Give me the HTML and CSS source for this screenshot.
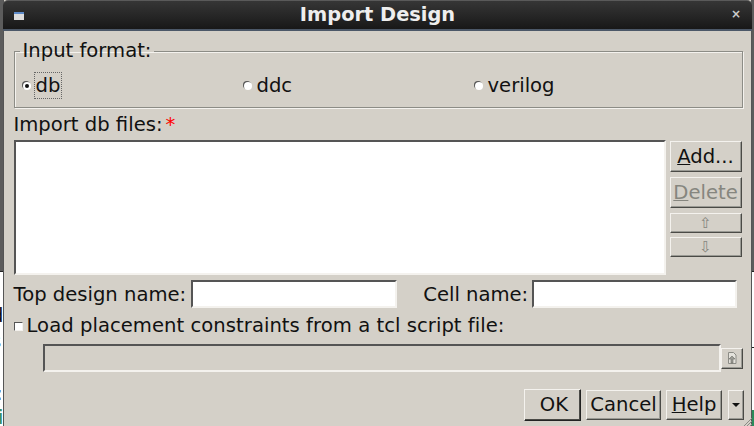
FILE: index.html
```html
<!DOCTYPE html>
<html lang="en">
<head>
    <meta charset="UTF-8">
    <title>Import Design</title>
    <link rel="stylesheet" href="styles.css">
</head>
<body>

    <!-- what shows of the desktop behind the dialog -->
    <div class="behind-dark"></div>
    <div class="behind-line"></div>
    <div class="behind-line second"></div>
    <span class="behind-text t1">d</span>
    <span class="behind-text t2">s</span>
    <span class="behind-text t3">:</span>
    <span class="behind-text t4">i</span>
    <span class="behind-green"></span>

    <div class="window">
        <div class="titlebar">
            <span class="win-icon"></span>
            <span class="win-title">Import Design</span>
            <span class="win-close">×</span>
        </div>

        <div class="dialog">
            <fieldset class="format">
                <legend>Input format:</legend>
                <div class="radio-row">
                    <label class="radio-item first"><span class="radio on"></span><span class="focus">db</span></label>
                    <label class="radio-item second-col"><span class="radio"></span><span class="radio-text">ddc</span></label>
                    <label class="radio-item"><span class="radio"></span><span class="radio-text">verilog</span></label>
                </div>
            </fieldset>

            <div class="files-label">Import db files:<span class="req">*</span></div>

            <div class="files-row">
                <div class="listbox"></div>
                <div class="side-buttons">
                    <button class="btn side"><u>A</u>dd...</button>
                    <button class="btn side off"><u>D</u>elete</button>
                    <button class="btn arrow off">⇧</button>
                    <button class="btn arrow off">⇩</button>
                </div>
            </div>

            <div class="names-row">
                <span class="name-label">Top design name:</span>
                <input class="entry top-name" type="text">
                <span class="name-label cell">Cell name:</span>
                <input class="entry cell-name" type="text">
            </div>

            <div class="check-row">
                <span class="checkbox"></span>
                <span>Load placement constraints from a tcl script file:</span>
            </div>

            <div class="script-row">
                <div class="script-entry"></div>
                <button class="btn browse">
                    <svg width="12" height="14" viewBox="0 0 12 14">
                        <path d="M2.500 1.500h5l2.500 2.500v8.500h-7.500z" fill="#e4e2dc" stroke="#8c8c86"/>
                        <path d="M6 5l-3 3h2v4h2v-4h2z" fill="#9a9a94" stroke="#6e6e68" stroke-width="0.6"/>
                    </svg>
                </button>
            </div>

            <div class="bottom-row">
                <button class="btn action default">OK</button>
                <button class="btn action cancel">Cancel</button>
                <button class="btn action help"><u>H</u>elp</button>
                <button class="btn action more"><span class="caret"></span></button>
            </div>
        </div>
        <svg class="grip" width="8" height="8" viewBox="0 0 8 8">
            <path d="M0 8L8 0M3 8L8 3M6 8L8 6" stroke="#8a8a84" fill="none"/>
        </svg>
    </div>

</body>
</html>
```

FILE: styles.css
```css
* {
    box-sizing: border-box;
}
html, body {
    margin: 0;
    height: 426px;
    overflow: hidden;
}
body {
    position: relative;
    background: #fff;
    font-family: "DejaVu Sans", sans-serif;
    font-size: 19.6px;
    color: #111;
    padding-left: 3px;
}

.behind-dark {
    position: absolute;
    left: 0;
    top: 0;
    width: 754px;
    height: 271px;
    background: #5c5c5c;
}
.behind-line {
    position: absolute;
    left: 0;
    top: 271px;
    width: 754px;
    height: 1px;
    background: #222;
}
.behind-line.second {
    left: 750px;
    width: 4px;
    top: 347px;
}
.behind-text {
    position: absolute;
    left: -9px;
    line-height: 20px;
    color: #111;
}
.t1 { top: 306px; }
.t2 { top: 332px; }
.t3 { top: 384px; left: -4px; }
.t4 { top: 408px; left: -2px; color: #2a8a5a; }
.behind-green {
    position: absolute;
    right: 0;
    top: 410px;
    width: 2px;
    height: 16px;
    background: #2a8a5a;
}

.window {
    position: relative;
    width: 749px;
    height: 426px;
    border-left: 1px solid #555;
    border-right: 1px solid #555;
    background: #d4d0c8;
}

.titlebar {
    position: relative;
    height: 31px;
    margin: 0 -1px;
    border-top: 1px solid #5a5a5a;
    border-bottom: 2px solid #4c5868;
    border-radius: 5px 5px 0 0;
    background: linear-gradient(#363636, #181818);
    display: flex;
    align-items: center;
    justify-content: center;
}
.win-icon {
    position: absolute;
    left: 11px;
    top: 11px;
    width: 10px;
    height: 8px;
    background: linear-gradient(#5d8ac8 25%, #dcdcdc 25%);
}
.win-title {
    color: #eee;
    font-weight: bold;
    font-size: 19.4px;
    margin-top: -1px;
}
.win-close {
    position: absolute;
    right: 11px;
    top: 6px;
    color: #ccc;
    font-weight: bold;
    font-size: 12px;
}

.dialog {
    padding: 9px 8px 0 9.500px;
}

.format {
    margin: 0;
    padding: 0 0 0 8px;
    height: 68px;
    border: 1px solid #8c8c86;
    box-shadow: 1px 1px 0 #f4f2ee, inset 1px 1px 0 #f4f2ee;
    width: 729px;
}
.format legend {
    margin-left: -3px;
    padding: 0 3px;
    line-height: 22px;
}
.radio-row {
    display: flex;
    align-items: center;
    margin-top: 10px;
}
.radio-item {
    display: flex;
    align-items: center;
}
.radio-item.first {
    width: 221px;
}
.radio-item.second-col {
    width: 231px;
}
.radio {
    position: relative;
    width: 8px;
    height: 8px;
    border-radius: 50%;
    background: #fff;
    box-shadow: -1px -1px 0 #555;
    margin-right: 3px;
}
.radio.on::after {
    content: "";
    position: absolute;
    left: 2px;
    top: 2px;
    width: 4px;
    height: 4px;
    border-radius: 50%;
    background: #111;
}
.focus {
    border: 1px dotted #666;
    padding: 2px 1px;
    line-height: 21px;
}
.radio-text {
    padding: 3px 2px;
    line-height: 21px;
}

.files-label {
    margin-top: 6px;
    line-height: 22px;
}
.req {
    color: #f00;
    margin-left: 3px;
}

.files-row {
    display: flex;
    margin-top: 4px;
}
.listbox {
    width: 652px;
    height: 135px;
    background: #fff;
    border: 2px solid;
    border-color: #555 #f4f2ee #f4f2ee #555;
}
.side-buttons {
    display: flex;
    flex-direction: column;
    margin-left: 4px;
    width: 72px;
    padding-top: 1px;
}

.btn {
    display: block;
    margin: 0;
    padding: 0;
    font: inherit;
    color: #111;
    background: #d4d0c8;
    border: 1px solid;
    border-color: #f4f2ee #4a4a46 #4a4a46 #f4f2ee;
    box-shadow: inset -1px -1px 0 #9a9a94;
}
.side {
    height: 31px;
    margin-bottom: 5px;
    line-height: 26px;
}
.off {
    color: #86867f;
}
.arrow {
    height: 20px;
    margin-bottom: 4px;
    font-size: 15px;
    line-height: 16px;
}

.names-row {
    display: flex;
    align-items: center;
    margin-top: 5px;
    height: 28px;
}
.entry {
    display: block;
    height: 28px;
    background: #fff;
    border: 2px solid;
    border-color: #555 #f4f2ee #f4f2ee #555;
    padding: 0;
    outline: none;
}
.top-name {
    width: 206px;
    margin-left: 5px;
}
.name-label.cell {
    margin-left: 26px;
}
.cell-name {
    width: 205px;
    margin-left: 4px;
}

.check-row {
    display: flex;
    align-items: center;
    margin-top: 5px;
    height: 26px;
    line-height: 26px;
    letter-spacing: 0.040px;
}
.checkbox {
    width: 9px;
    height: 9px;
    background: #fff;
    border: 1px solid;
    border-color: #555 #f4f2ee #f4f2ee #555;
    margin-right: 4px;
}

.script-row {
    display: flex;
    align-items: center;
    margin-top: 5px;
    padding-left: 29px;
}
.script-entry {
    width: 678px;
    height: 28px;
    border: 2px solid;
    border-color: #555 #f4f2ee #f4f2ee #555;
}
.browse {
    width: 22px;
    height: 21px;
    display: flex;
    align-items: center;
    justify-content: center;
}

.bottom-row {
    display: flex;
    align-items: center;
    justify-content: flex-end;
    margin-top: 17px;
    margin-right: -1px;
}
.action {
    height: 30px;
    line-height: 26px;
    margin-left: 5px;
}
.default {
    width: 57px;
    height: 32px;
    border-color: #f4f2ee #222 #222 #f4f2ee;
    box-shadow: inset -1px -1px 0 #4a4a46;
    padding-left: 3px;
}
.cancel {
    width: 75px;
}
.help {
    width: 56px;
}
.more {
    width: 16px;
    margin-left: 6px;
    display: flex;
    align-items: center;
    justify-content: center;
}
.caret {
    width: 0;
    height: 0;
    border-left: 4px solid transparent;
    border-right: 4px solid transparent;
    border-top: 4px solid #111;
}

.grip {
    position: absolute;
    right: -1px;
    bottom: 0;
}
```
